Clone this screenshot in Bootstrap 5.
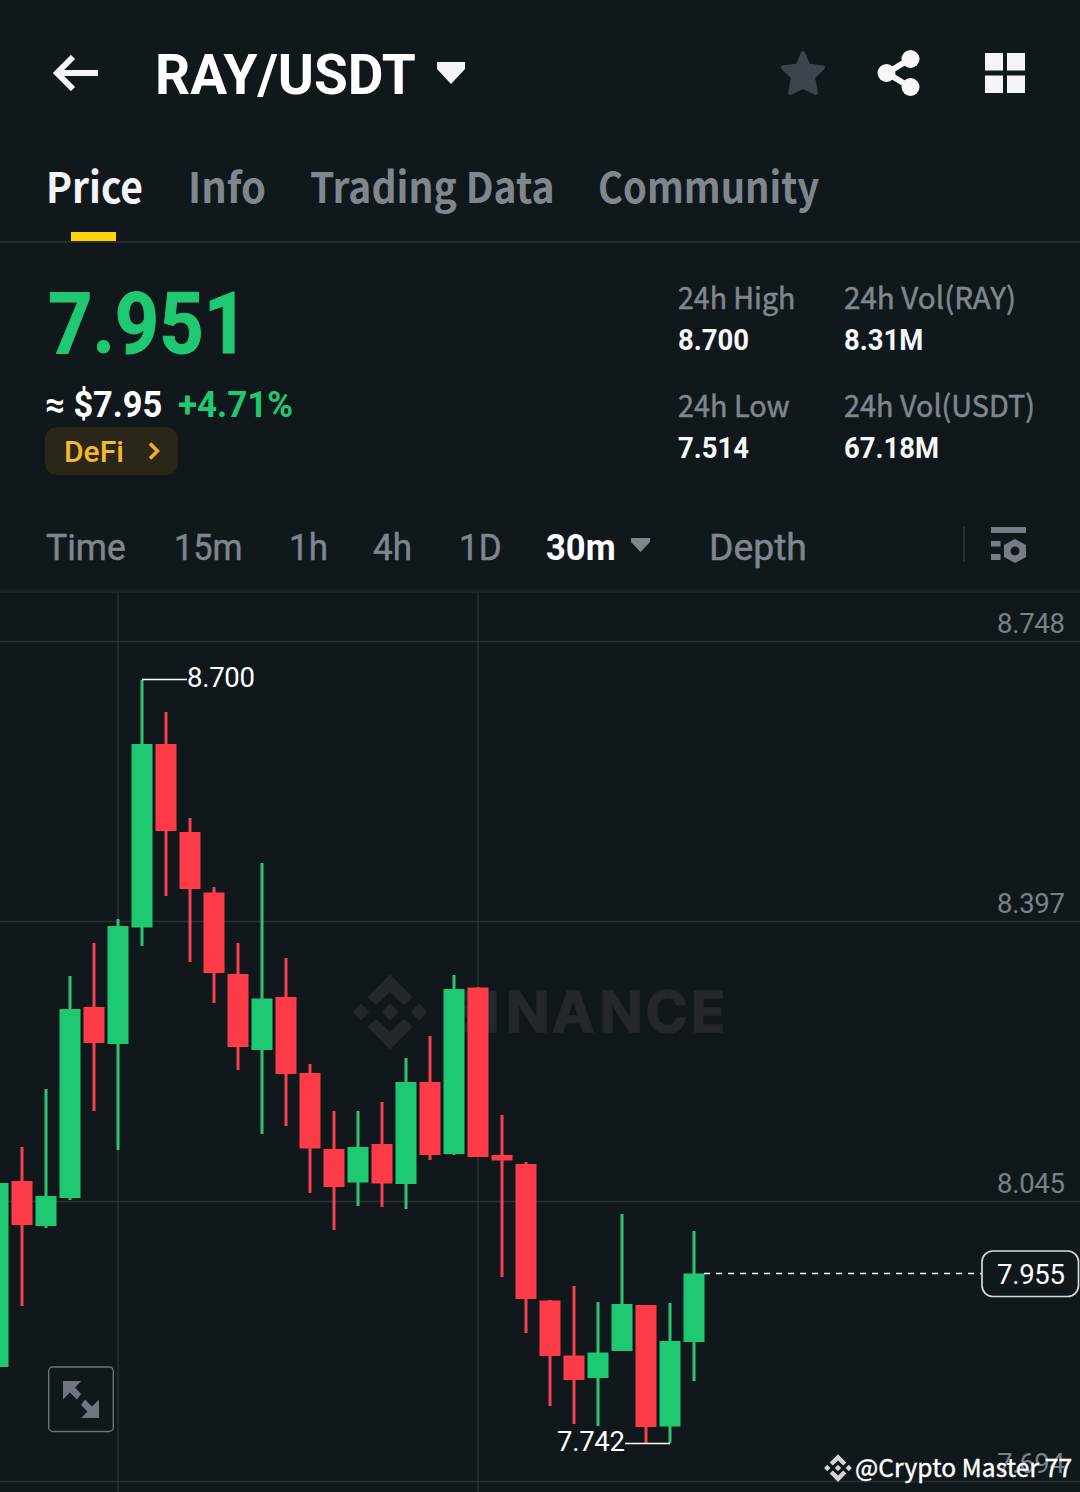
<!DOCTYPE html>
<html lang="en">
<head>
<meta charset="utf-8">
<meta name="viewport" content="width=device-width, initial-scale=1">
<title>RAY/USDT</title>
<link href="https://cdn.jsdelivr.net/npm/bootstrap@5.3.0/dist/css/bootstrap.min.css" rel="stylesheet">
<style>
  :root { --up:#1ec971; --down:#ff3b47; --muted:#80868e; --ink:#11181c; }
  body { background:var(--ink); color:#fff; font-family:Roboto,"Liberation Sans",sans-serif; width:1080px; height:1492px; overflow:hidden; }
  svg { display:block; flex:none; }
  .sans { font-family:"Noto Sans CJK SC","Noto Sans",sans-serif; }
  .squeeze { display:block; white-space:nowrap; transform-origin:0 50%; transform:scaleX(var(--sx,1)); }
  .muted { color:var(--muted); }
  .up { color:var(--up); }

  .topbar { height:150px; padding:0 54px 4px 52px; }
  .pair { font-size:56px; font-weight:700; line-height:64px; --sx:.98; width:282px; margin-left:57px; padding-top:3px; }
  .topbar .icons { gap:51px; }

  .tabs { height:93px; border-bottom:2px solid #262c30; padding-left:46px; }
  .tabs a { color:var(--muted); text-decoration:none; font-size:42px; font-weight:700; line-height:69px; height:91px; position:relative; }
  .tabs a.active { color:#f3f4f8; }
  .tabs a.active::after { content:""; position:absolute; left:25px; bottom:0; width:45px; height:9px; background:#fcd30f; }
  .tabs .squeeze { --sx:.93; }

  .ticker { height:258px; padding:36px 0 0 45px; }
  .last { font-size:86px; font-weight:700; line-height:90px; --sx:.9; margin-left:3px; -webkit-text-stroke:1px var(--up); }
  .conv { font-size:36px; font-weight:700; line-height:40px; margin-top:16px; }
  .tagpill { width:133px; height:48px; margin-top:2px; padding:0 18px 0 19px; border-radius:12px; background:#2a2718; color:#f8b82a; font-size:30px; font-weight:500; }
  .stats { margin-top:-4px; }
  .stat { height:108px; font-size:30px; }
  .stat .muted { line-height:42px; --sx:.96; -webkit-text-stroke:.5px var(--muted); }
  .stat b { line-height:42px; padding-top:2px; --sx:.915; color:#f6f7fa; font-size:30px; }

  .frames { height:92px; padding:2px 53px 0 46px; border-bottom:3px solid #1e2327; font-size:36px; color:var(--muted); }
  .frames .squeeze { padding-top:2px; --sx:.97; }
  .frames span.squeeze { -webkit-text-stroke:.5px var(--muted); }
  .rule { width:2px; height:36px; margin-bottom:5px; background:#2c3136; }
</style>
</head>
<body>
<div class="d-flex flex-column">

  <header class="topbar d-flex align-items-center">
    <svg width="46" height="36" viewBox="0 0 46 36"><path d="M5 18H46M21 2 5 18 21 34" fill="none" stroke="#f3f3f8" stroke-width="6"/></svg>
    <div class="pair"><span class="squeeze">RAY/USDT</span></div>
    <svg width="28" height="22" viewBox="0 0 28 22"><path d="M0 0H28V7L14 22 0 7Z" fill="#f3f3f8"/></svg>
    <div class="icons d-flex align-items-center ms-auto">
      <svg width="46" height="46" viewBox="0 0 46 46"><path d="M23 3 28.500 15.500 43 17.500 33 27.500 36 43 23 37 10 43 13 27.500 3 17.500 17.500 15.500Z" fill="#3e444b" stroke="#3e444b" stroke-width="4" stroke-linejoin="round"/></svg>
      <svg width="44" height="46" viewBox="0 0 44 46"><g fill="#f8f8fb"><circle cx="33.500" cy="9" r="9"/><circle cx="9.500" cy="23" r="9"/><circle cx="33.500" cy="37" r="9"/></g><path d="M33 9 10 23 33 37" fill="none" stroke="#f8f8fb" stroke-width="6"/></svg>
      <svg style="margin-left:12px" width="42" height="40" viewBox="0 0 42 40"><path d="M1 0h18v17.500H1zM23 0h18v17.500h-18zM1 22.500h18V40H1zM23 22.500h18V40h-18z" fill="#f3f3f8"/></svg>
    </div>
  </header>

  <nav class="tabs sans d-flex">
    <a class="active" href="#" style="width:142px"><span class="squeeze">Price</span></a>
    <a href="#" style="width:122px"><span class="squeeze" style="--sx:.95">Info</span></a>
    <a href="#" style="width:288px"><span class="squeeze">Trading Data</span></a>
    <a href="#"><span class="squeeze" style="--sx:.91">Community</span></a>
  </nav>

  <section class="ticker d-flex">
    <div style="width:633px">
      <div class="last up"><span class="squeeze">7.951</span></div>
      <div class="conv d-flex">
        <span class="squeeze" style="width:133px;--sx:.955">≈ $7.95</span>
        <span class="squeeze up" style="--sx:.97">+4.71%</span>
      </div>
      <div class="tagpill d-flex align-items-center justify-content-between">
        <span class="squeeze">DeFi</span>
        <svg width="12" height="18" viewBox="0 0 12 18"><path d="M2 1.500 9.500 9 2 16.500" fill="none" stroke="#f8a82a" stroke-width="3.600"/></svg>
      </div>
    </div>
    <div class="stats" style="width:166px">
      <div class="stat"><span class="squeeze muted sans" style="--sx:.95">24h High</span><b class="squeeze">8.700</b></div>
      <div class="stat"><span class="squeeze muted sans">24h Low</span><b class="squeeze">7.514</b></div>
    </div>
    <div class="stats">
      <div class="stat"><span class="squeeze muted sans" style="--sx:.985">24h Vol(RAY)</span><b class="squeeze">8.31M</b></div>
      <div class="stat"><span class="squeeze muted sans">24h Vol(USDT)</span><b class="squeeze">67.18M</b></div>
    </div>
  </section>

  <nav class="frames d-flex align-items-center">
    <span class="squeeze" style="width:128px;--sx:.985">Time</span>
    <span class="squeeze" style="width:115px;--sx:.95">15m</span>
    <span class="squeeze" style="width:84px">1h</span>
    <span class="squeeze" style="width:86px">4h</span>
    <span class="squeeze" style="width:87px">1D</span>
    <b class="squeeze text-white" style="width:85px;--sx:.96">30m</b>
    <svg style="margin-bottom:4px" width="19" height="14" viewBox="0 0 19 14"><path d="M0 0H19V4L9.500 14 0 4Z" fill="#80868e"/></svg>
    <span class="squeeze" style="margin-left:59px;--sx:1.035">Depth</span>
    <div class="rule ms-auto"></div>
    <svg style="margin-left:26px;margin-bottom:3px" width="36" height="36" viewBox="0 0 36 36"><g fill="#777c87"><path d="M0 0h35v6H0zM0 14h9.500v5.500H0zM0 27h9.500v6H0z"/><path fill-rule="evenodd" d="M24 12 35 18V30L24 36 13 30V18ZM24 19.500a4.500 4.500 0 1 0 0 9 4.500 4.500 0 1 0 0-9Z"/></g></svg>
  </nav>

  <svg id="chart" width="1080" height="899" viewBox="0 593 1080 899" font-family="Roboto,'Liberation Sans',sans-serif" font-size="27.500">
    <path d="M118 592V1492M478 592V1492M0 641.500H1080M0 921.500H1080M0 1201.500H1080M0 1481.500H1080" stroke="#2a2f33" stroke-width="1.600"/>
    <g fill="#24272c">
      <g transform="translate(390 1012)">
        <path id="mark" d="M0-37.500 22.500-15 14-6.500 0-20-14-6.500-22.500-15ZM0 37.500 22.500 15 14 6.500 0 20-14 6.500-22.500 15ZM0-8.500 8.500 0 0 8.500-8.500 0ZM-29-8.500-20.500 0-29 8.500-37.500 0ZM29-8.500 37.500 0 29 8.500 20.500 0Z"/>
      </g>
      <text x="441 483.500 506 552 599.500 645.500 690.500" y="1032" font-family="Inter,sans-serif" font-weight="700" font-size="57" stroke="#24272c" stroke-width="1.500">BINANCE</text>
    </g>
    <g id="candles"></g>
    <path d="M142 679.500H187M625 1443.500H670" stroke="#fff" stroke-width="1.600"/>
    <path d="M704 1273.500H982" stroke="#fff" stroke-width="1.600" stroke-dasharray="6 6"/>
    <g fill="#fff">
      <text x="187" y="687" textLength="68">8.700</text>
      <text x="557" y="1451" textLength="68">7.742</text>
    </g>
    <g fill="#7b8187">
      <text x="997" y="633" textLength="68">8.748</text>
      <text x="997" y="913" textLength="68">8.397</text>
      <text x="997" y="1193" textLength="68">8.045</text>
      <text x="997" y="1473" textLength="68">7.694</text>
    </g>
    <rect x="982" y="1251" width="96.500" height="45.500" rx="11" fill="#11181c" stroke="#d5d7da" stroke-width="1.700"/>
    <text x="997" y="1284" textLength="68" fill="#fff">7.955</text>
    <rect x="48.700" y="1367" width="64.600" height="64.500" rx="4" fill="#11181c" stroke="#6b7178" stroke-width="1.400"/>
    <path d="M63 1381H81.300L75 1387.500 81 1394 77 1399.500 69.800 1392.500 63 1399.500ZM99 1418H81.300L87.500 1411.500 81 1405 85 1399.500 92 1406.500 99 1399.700Z" fill="#70757f"/>
    <g transform="translate(838 1468) scale(.37)" fill="#d4d4d6"><use href="#mark"/></g>
    <text x="855" y="1477" font-family="'Noto Sans CJK SC',sans-serif" font-weight="400" stroke="#fff" stroke-width=".4" font-size="24.500" textLength="217" fill="#fff">@Crypto Master 77</text>
  </svg>
</div>

<script src="https://cdn.jsdelivr.net/npm/bootstrap@5.3.0/dist/js/bootstrap.bundle.min.js"></script>
<script>
  // centre x, wick top, body top, body bottom, wick bottom, rising
  const candles = [
    [-2,1183,1183,1367,1367,1],[22,1147,1181,1225,1306,0],[46,1089,1196,1226,1228,1],[70,976,1009,1198,1200,1],
    [94,943,1007,1043,1111,0],[118,919,926,1044,1150,1],[142,680,744,927.5,946,1],[166,712,744,831,896,0],
    [190,818,832,889,962,0],[214,887,892.5,973,1003,0],[238,943,974,1047,1070,0],[262,863,998.5,1050,1134,1],
    [286,958,997,1074,1126,0],[310,1064,1073,1148.500,1193,0],[334,1111,1149,1187,1230,0],[358,1111,1147,1182.500,1206,1],
    [382,1102,1144,1183.500,1207,0],[406,1058,1082,1184,1209,1],[430,1036,1082,1155,1160,0],[454,975,989,1154,1155,1],
    [478,987,987.500,1157,1157,0],[502,1115,1155,1160.500,1277,0],[526,1162,1164,1299,1333,0],[550,1300,1300.500,1356,1406,0],
    [574,1286,1355.500,1380,1424,0],[598,1302,1352.500,1378,1426,1],[622,1214,1304,1351,1351,1],[646,1305,1305,1427,1443,0],
    [670,1303,1341,1426.500,1443,1],[694,1231,1273.500,1342,1381,1]];
  document.getElementById('candles').innerHTML = candles.map(([x,h,t,b,l,up]) => {
    const c = up ? '#1ec971' : '#ff3b47';
    return `<path d="M${x} ${h}V${l}" stroke="${up ? '#2fc277' : '#f8414f'}" stroke-width="3"/><rect x="${x-10.5}" y="${t}" width="21" height="${b-t}" fill="${c}"/>`;
  }).join('');
</script>
</body>
</html>
